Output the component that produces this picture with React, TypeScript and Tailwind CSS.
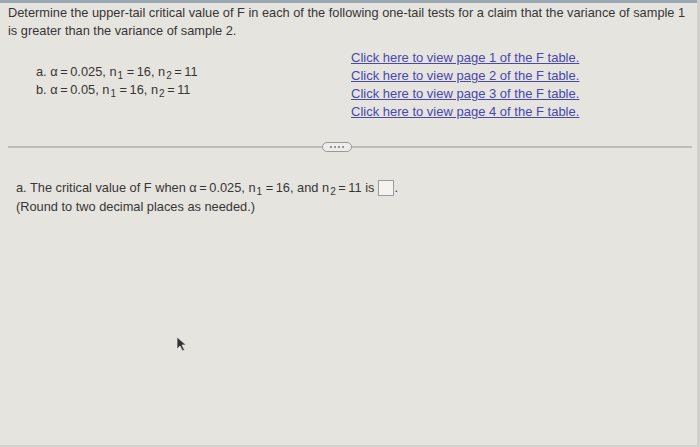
import React from "react";

const Sub = ({ children }: { children: React.ReactNode }) => (
  <sub className="text-[10px] relative top-[3px] align-baseline ml-[1px]">{children}</sub>
);

const Eq = () => <span>{"\u2009=\u2009"}</span>;
const EqS = () => <span>{" =\u2009"}</span>;

export default function App() {
  return (
    <div
      className="w-[700px] h-[447px] bg-[#e6e4de] text-[#363636] relative overflow-hidden"
      style={{ fontFamily: '"Liberation Sans", Arial, sans-serif' }}
    >
      <div className="h-[3px] bg-[#9aa8b3]" />
      <div className="absolute right-0 top-0 bottom-0 w-[3px] bg-[#d2d0cb]" />
      <div className="absolute left-0 right-0 bottom-0 h-[2px] bg-[#d4d2cd]" />
      <div className="px-[8px] pt-[1px] text-[12.8px] leading-[18px]">
        <p>
          Determine the upper-tail critical value of F in each of the following one-tail tests for a claim that the variance of sample 1 is greater than the variance of sample 2.
        </p>
        <div className="flex mt-[9px]">
          <div className="w-[343px] pl-[28px] pt-[14px] leading-[18px]">
            <div>
              a. α<Eq />0.025, n<Sub>1</Sub><EqS />16, n<Sub>2</Sub><Eq />11
            </div>
            <div>
              b. α<Eq />0.05, n<Sub>1</Sub><EqS />16, n<Sub>2</Sub><Eq />11
            </div>
          </div>
          <div className="flex flex-col text-[#4848ae] text-[13px] leading-[18px]">
            <span className="underline">Click here to view page 1 of the F table.</span>
            <span className="underline">Click here to view page 2 of the F table.</span>
            <span className="underline">Click here to view page 3 of the F table.</span>
            <span className="underline">Click here to view page 4 of the F table.</span>
          </div>
        </div>
        <div className="relative mt-[21px] h-[10px] flex items-center">
          <div className="w-full h-[2px] bg-[#bdbcb8]" />
          <div className="absolute left-[314px] top-0 w-[30px] h-[10px] rounded-full border border-[#9a9a9a] bg-[#eeece8] flex items-center justify-center gap-[2px]">
            <span className="w-[2px] h-[2px] bg-[#777] rounded-full" />
            <span className="w-[2px] h-[2px] bg-[#777] rounded-full" />
            <span className="w-[2px] h-[2px] bg-[#777] rounded-full" />
            <span className="w-[2px] h-[2px] bg-[#777] rounded-full" />
          </div>
        </div>
        <div className="pl-[8px] mt-[26px] leading-[19px]">
          <div className="flex items-center">
            <span>
              a. The critical value of F when α<Eq />0.025, n<Sub>1</Sub><EqS />16, and n<Sub>2</Sub><Eq />11 is
            </span>
            <span className="inline-block ml-[4px] w-[16px] h-[16px] border border-[#9a9aa0] bg-[#f4f3ef]" />
            <span>.</span>
          </div>
          <div>(Round to two decimal places as needed.)</div>
        </div>
      </div>
      <svg className="absolute left-[176px] top-[336px]" width="12" height="16" viewBox="0 0 12 16">
        <path d="M1 1 L1 13 L4 10 L6.5 15 L8.5 14 L6 9 L10 9 Z" fill="#333" stroke="#ddd" strokeWidth="0.8" />
      </svg>
    </div>
  );
}
